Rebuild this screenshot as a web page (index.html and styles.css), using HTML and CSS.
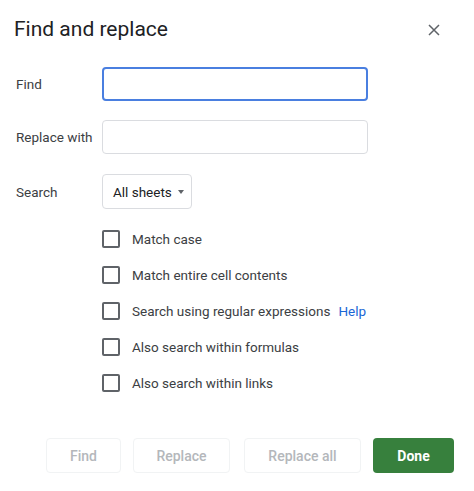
FILE: index.html
```html
<!DOCTYPE html>
<html>
<head>
<meta charset="utf-8">
<link rel="stylesheet" href="styles.css">
</head>
<body>
<div class="dialog">
  <div class="header">
    <h1 class="title">Find and replace</h1>
    <button class="close" aria-label="Close">
      <svg width="12" height="12" viewBox="0 0 12 12"><path d="M1 1L11 11M11 1L1 11" stroke="#5f6368" stroke-width="1.5" fill="none"/></svg>
    </button>
  </div>
  <div class="form">
    <div class="row row-find">
      <label class="label">Find</label>
      <div class="input input-focus"></div>
    </div>
    <div class="row row-replace">
      <label class="label">Replace with</label>
      <div class="input"></div>
    </div>
    <div class="row row-search">
      <label class="label">Search</label>
      <div class="select">All sheets <span class="caret"></span></div>
    </div>
  </div>
  <ul class="options">
    <li class="option"><span class="box"></span><span class="opt-text">Match case</span></li>
    <li class="option"><span class="box"></span><span class="opt-text">Match entire cell contents</span></li>
    <li class="option"><span class="box"></span><span class="opt-text">Search using regular expressions</span><a class="help">Help</a></li>
    <li class="option"><span class="box"></span><span class="opt-text">Also search within formulas</span></li>
    <li class="option"><span class="box"></span><span class="opt-text">Also search within links</span></li>
  </ul>
  <div class="actions">
    <button class="btn btn-disabled btn-find">Find</button>
    <button class="btn btn-disabled btn-replace">Replace</button>
    <button class="btn btn-disabled btn-replace-all">Replace all</button>
    <button class="btn btn-primary">Done</button>
  </div>
</div>
</body>
</html>
```

FILE: styles.css
```css
* { box-sizing: border-box; }
html, body { margin: 0; padding: 0; background: #fff; }
body {
  font-family: Roboto, "Liberation Sans", Arial, sans-serif;
  color: #3c4043;
  font-size: 13.5px;
}
.dialog {
  width: 474px;
  height: 491px;
  padding: 15px 20px 0 14px;
}
.header {
  display: flex;
  justify-content: space-between;
  align-items: center;
  height: 28px;
}
.title {
  margin: 0;
  font-size: 21px;
  font-weight: 400;
  line-height: 28px;
  color: #202124;
}
.close {
  border: 0;
  background: none;
  padding: 0;
  width: 12px;
  height: 12px;
  margin-right: 14px;
  margin-top: 2px;
  display: flex;
}
.form {
  margin-top: 24px;
  padding-left: 2px;
  display: flex;
  flex-direction: column;
}
.row {
  display: flex;
  align-items: center;
}
.row-replace { margin-top: 19px; }
.row-search { margin-top: 20px; }
.label {
  width: 86px;
  flex: none;
  color: #3c4043;
}
.input {
  width: 266px;
  height: 34px;
  border: 1px solid #dadce0;
  border-radius: 4px;
}
.input-focus {
  border: 2px solid #4a7fe0;
}
.select {
  height: 35px;
  width: 90px;
  border: 1px solid #dadce0;
  border-radius: 4px;
  display: flex;
  align-items: center;
  padding-left: 10px;
  color: #202124;
  font-size: 13.5px;
}
.caret {
  margin-left: 6px;
  width: 0;
  height: 0;
  border-left: 3.5px solid transparent;
  border-right: 3.5px solid transparent;
  border-top: 4px solid #5f6368;
}
.options {
  list-style: none;
  margin: 12px 0 0 88px;
  padding: 0;
}
.option {
  height: 36px;
  display: flex;
  align-items: center;
}
.box {
  width: 18px;
  height: 18px;
  border: 2px solid #5f6368;
  border-radius: 2px;
  flex: none;
}
.opt-text {
  margin-left: 12px;
  color: #3c4043;
}
.help {
  margin-left: 8px;
  color: #1a66d6;
}
.actions {
  margin-top: 37px;
  padding-left: 32px;
  display: flex;
  gap: 12px;
}
.btn {
  font-family: Roboto, "Liberation Sans", Arial, sans-serif;
  font-size: 14px;
  font-weight: 500;
  height: 35px;
  border-radius: 4px;
  background: #fff;
  padding: 0;
}
.btn-disabled {
  border: 1px solid #f1f3f4;
  color: #b4b7bb;
}
.btn-find { width: 75px; }
.btn-replace { width: 97px; }
.btn-replace-all { width: 117px; margin-left: 2px; }
.btn-primary {
  width: 81px;
  border: 0;
  background: #37803d;
  color: #fff;
  font-weight: 700;
}
```
